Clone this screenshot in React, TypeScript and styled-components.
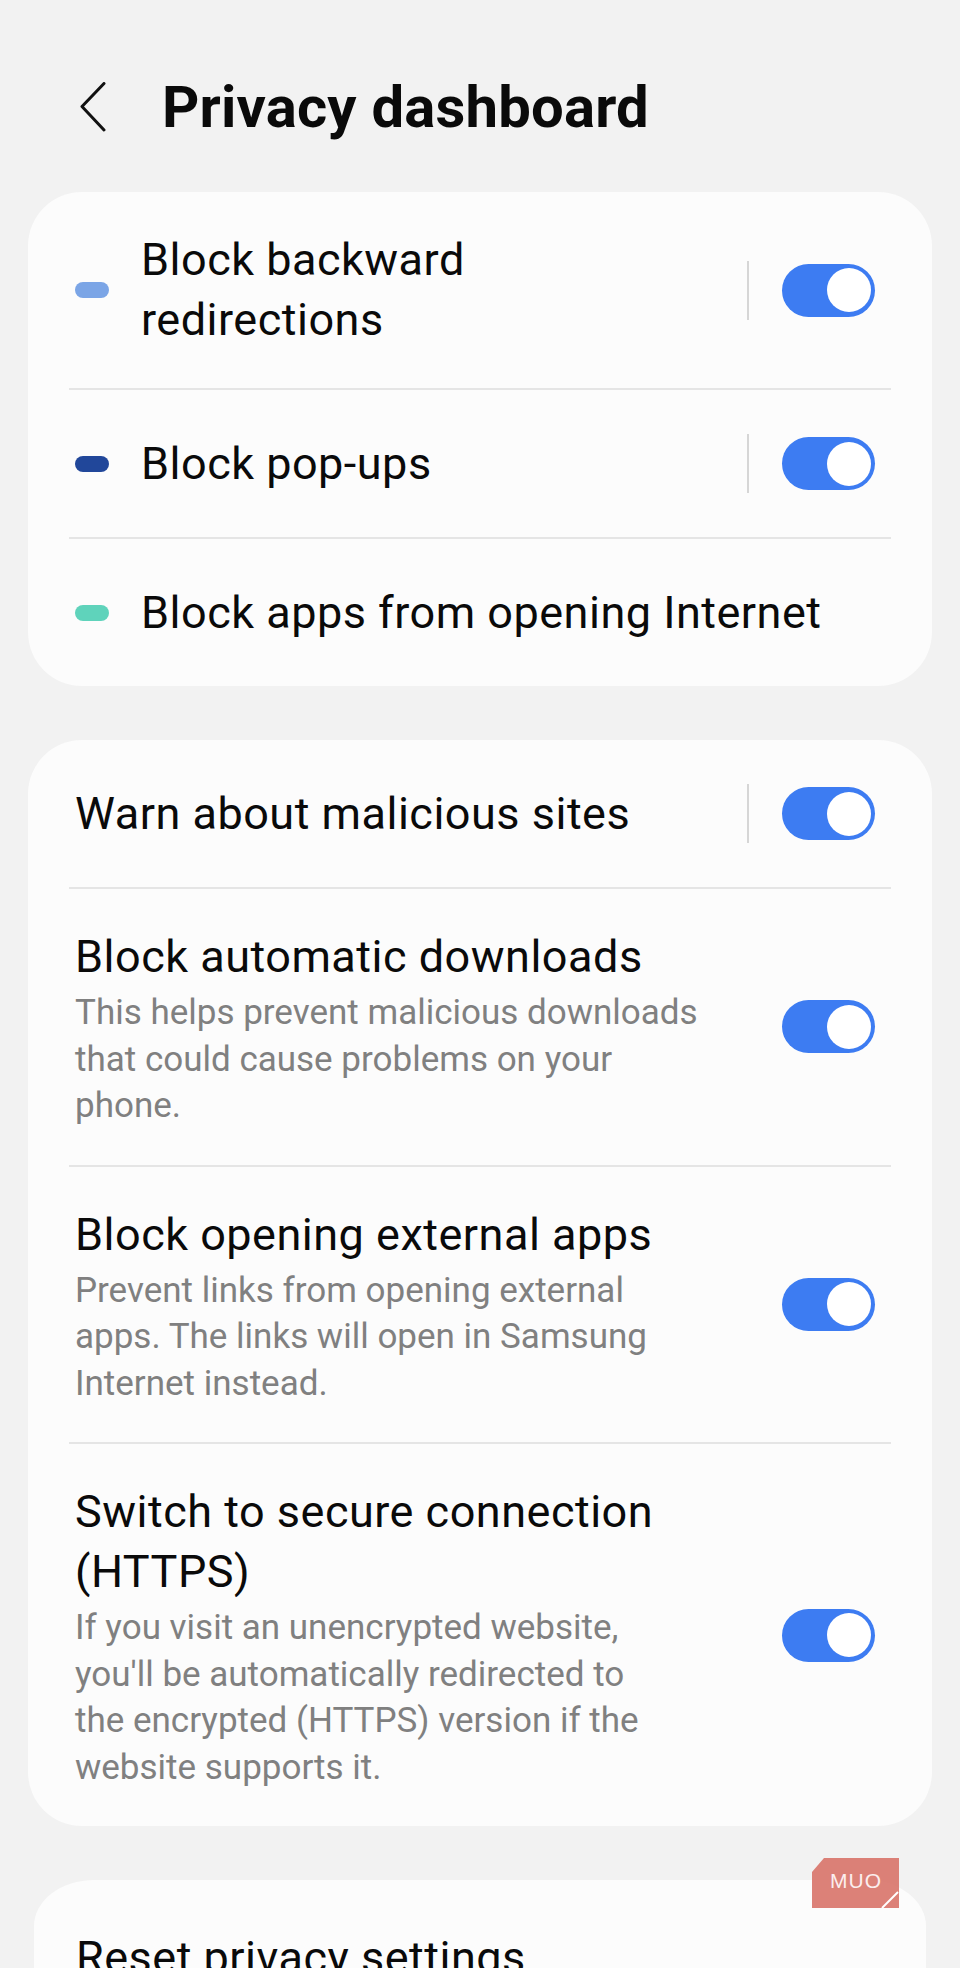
import styled, { createGlobalStyle } from "styled-components";

const GlobalStyle = createGlobalStyle`
  html, body {
    margin: 0;
    padding: 0;
    background-color: #f2f2f2;
    font-family: Roboto, "Noto Sans", Arial, sans-serif;
    -webkit-font-smoothing: antialiased;
  }
  * {
    box-sizing: border-box;
  }
`;

const Page = styled.div`
  position: relative;
  width: 960px;
  min-height: 1968px;
  padding: 32px 28px 0 28px;
  overflow: hidden;
`;

const Header = styled.header`
  display: flex;
  align-items: center;
  gap: 54px;
  height: 150px;
  padding-left: 52px;
  margin-bottom: 10px;
`;

const BackButton = styled.button`
  display: flex;
  align-items: center;
  justify-content: center;
  width: 28px;
  height: 50px;
  padding: 0;
  border: none;
  background: transparent;
  color: #111;
`;

const Title = styled.h1`
  margin: 0;
  font-size: 58px;
  font-weight: 700;
  letter-spacing: 0.2px;
  color: #0a0a0a;
`;

const CardList = styled.div`
  display: flex;
  flex-direction: column;
  gap: 54px;
`;

const Card = styled.section<{ $inset?: number }>`
  margin: 0 ${({ $inset }) => $inset || 0}px;
  background-color: #fcfcfc;
  border-radius: ${({ $inset }) => ($inset ? "60px / 46px" : "54px")};
  overflow: hidden;
`;

const Row = styled.div<{ $top?: number; $left?: number }>`
  display: flex;
  align-items: center;
  min-height: 147px;
  padding: ${({ $top }) => $top || 38}px 57px 38px ${({ $left }) => $left || 47}px;
`;

const RowDivider = styled.div`
  height: 2px;
  margin: 0 41px;
  background-color: #e5e5e5;
`;

const Dot = styled.span<{ $color: string }>`
  flex: none;
  width: 34px;
  height: 16px;
  margin-right: 32px;
  border-radius: 8px;
  background-color: ${({ $color }) => $color};
`;

const TextBlock = styled.div`
  flex: 1;
  display: flex;
  flex-direction: column;
  min-width: 0;
`;

const RowTitle = styled.div`
  font-size: 45px;
  line-height: 60px;
  letter-spacing: 0.5px;
  color: #0a0a0a;
  white-space: pre-line;
`;

const RowSummary = styled.div`
  margin: 3px 0 -3px;
  font-size: 35px;
  line-height: 46.5px;
  color: #808080;
  white-space: pre-line;
`;

const VDivider = styled.span`
  flex: none;
  width: 2px;
  height: 59px;
  margin-right: 33px;
  background-color: #d6d6d6;
`;

const Track = styled.span<{ $on: boolean }>`
  flex: none;
  display: flex;
  align-items: center;
  justify-content: ${({ $on }) => ($on ? "flex-end" : "flex-start")};
  width: 93px;
  height: 53px;
  padding: 0 4px;
  border-radius: 27px;
  background-color: ${({ $on }) => ($on ? "#3d7cf2" : "#c4c4c4")};
`;

const Knob = styled.span`
  width: 44px;
  height: 44px;
  border-radius: 50%;
  background-color: #ffffff;
`;

const Watermark = styled.div`
  position: absolute;
  left: 807px;
  top: 1858px;
  width: 92px;
  height: 50px;
  display: flex;
  align-items: center;
  justify-content: center;
  padding-left: 6px;
`;

const WatermarkText = styled.span`
  position: relative;
  font-family: "Liberation Sans", Arial, sans-serif;
  font-size: 21px;
  letter-spacing: 1px;
  color: #fbeeee;
  margin-top: -4px;
`;

const WatermarkShape = styled.svg`
  position: absolute;
  inset: 0;
`;

type Item = {
  title: string;
  summary?: string;
  dot?: string;
  toggle?: boolean;
  divider?: boolean;
};

const blockers: Item[] = [
  { title: "Block backward\nredirections", dot: "#7ba5e6", toggle: true, divider: true },
  { title: "Block pop-ups", dot: "#21479a", toggle: true, divider: true },
  { title: "Block apps from opening Internet", dot: "#5fd3bb" },
];

const protections: Item[] = [
  { title: "Warn about malicious sites", toggle: true, divider: true },
  {
    title: "Block automatic downloads",
    summary: "This helps prevent malicious downloads\nthat could cause problems on your\nphone.",
    toggle: true,
  },
  {
    title: "Block opening external apps",
    summary: "Prevent links from opening external\napps. The links will open in Samsung\nInternet instead.",
    toggle: true,
  },
  {
    title: "Switch to secure connection\n(HTTPS)",
    summary:
      "If you visit an unencrypted website,\nyou'll be automatically redirected to\nthe encrypted (HTTPS) version if the\nwebsite supports it.",
    toggle: true,
  },
];

function Toggle({ on }: { on: boolean }) {
  return (
    <Track $on={on}>
      <Knob />
    </Track>
  );
}

function SettingRow({ item }: { item: Item }) {
  return (
    <Row>
      {item.dot && <Dot $color={item.dot} />}
      <TextBlock>
        <RowTitle>{item.title}</RowTitle>
        {item.summary && <RowSummary>{item.summary}</RowSummary>}
      </TextBlock>
      {item.divider && <VDivider />}
      {item.toggle && <Toggle on />}
    </Row>
  );
}

function SettingsCard({ items }: { items: Item[] }) {
  return (
    <Card>
      {items.map((item, i) => (
        <div key={item.title}>
          {i > 0 && <RowDivider />}
          <SettingRow item={item} />
        </div>
      ))}
    </Card>
  );
}

export default function App() {
  return (
    <>
      <GlobalStyle />
      <Page>
        <Header>
          <BackButton aria-label="Back">
            <svg width="28" height="50" viewBox="0 0 28 50" fill="none">
              <polyline
                points="24,1.5 2,24.5 24,48"
                stroke="currentColor"
                strokeWidth="3"
                strokeLinecap="round"
                strokeLinejoin="round"
              />
            </svg>
          </BackButton>
          <Title>Privacy dashboard</Title>
        </Header>
        <CardList>
          <SettingsCard items={blockers} />
          <SettingsCard items={protections} />
          <Card $inset={6}>
            <Row $top={46} $left={42}>
              <TextBlock>
                <RowTitle>Reset privacy settings</RowTitle>
              </TextBlock>
            </Row>
          </Card>
        </CardList>
        <Watermark>
          <WatermarkShape width="92" height="50" viewBox="0 0 92 50">
            <polygon points="17,0 92,0 92,50 5,50 5,14" fill="#d9766d" fillOpacity="0.92" />
            <line x1="91" y1="34" x2="75" y2="50" stroke="#ffffff" strokeWidth="2" />
          </WatermarkShape>
          <WatermarkText>MUO</WatermarkText>
        </Watermark>
      </Page>
    </>
  );
}
